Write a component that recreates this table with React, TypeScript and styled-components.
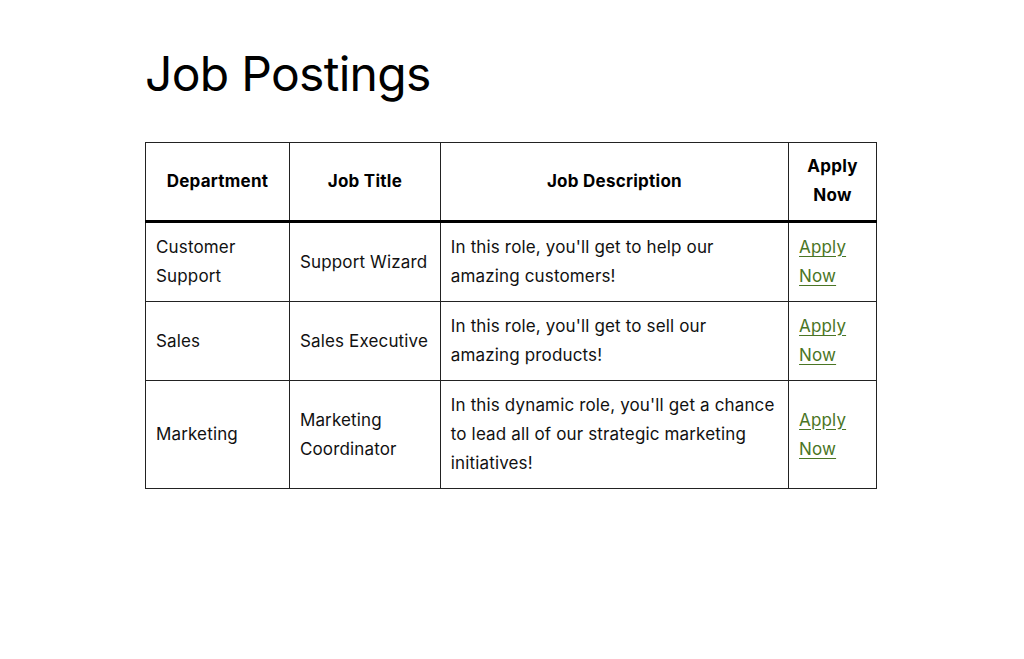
import React from "react";
import styled, { createGlobalStyle } from "styled-components";

const Global = createGlobalStyle`
  html, body { margin: 0; padding: 0; background: #fff; }
  body { font-family: Inter, "Noto Sans", sans-serif; color: #111; }
`;

const Page = styled.main`
  padding: 0 0 0 145px;
`;

const Title = styled.h1`
  font-size: 48px;
  font-weight: 400;
  margin: 0;
  padding-top: 44px;
  line-height: 60px;
  letter-spacing: -0.7px;
  color: #000;
`;

const Table = styled.table`
  margin-top: 38px;
  border-collapse: collapse;
  width: 732px;
  font-size: 17px;
  line-height: 29px;
  letter-spacing: 0.15px;
  color: #111;
`;

const Th = styled.th<{ $w: number }>`
  width: ${(p) => p.$w}px;
  border: 1px solid #222;
  border-bottom: 3px solid #000;
  padding: 9px 10px 10px;
  font-weight: 700;
  letter-spacing: 0.25px;
  text-align: center;
  color: #000;
  box-sizing: border-box;
`;

const Td = styled.td`
  border: 1px solid #222;
  padding: 10px 9px 10px 10px;
  vertical-align: middle;
`;

const Link = styled.a`
  color: #4a7525;
  text-decoration: underline;
  text-underline-offset: 3px;
`;

const rows = [
  ["Customer Support", "Support Wizard", "In this role, you'll get to help our amazing customers!"],
  ["Sales", "Sales Executive", "In this role, you'll get to sell our amazing products!"],
  ["Marketing", "Marketing Coordinator", "In this dynamic role, you'll get a chance to lead all of our strategic marketing initiatives!"],
];

export default function App() {
  return (
    <>
      <Global />
      <Page>
        <Title>Job Postings</Title>
        <Table>
          <thead>
            <tr>
              <Th $w={144}>Department</Th>
              <Th $w={151}>Job Title</Th>
              <Th $w={349}>Job Description</Th>
              <Th $w={88}>Apply Now</Th>
            </tr>
          </thead>
          <tbody>
            {rows.map((r) => (
              <tr key={r[0]}>
                <Td>{r[0]}</Td>
                <Td>{r[1]}</Td>
                <Td>{r[2]}</Td>
                <Td>
                  <Link href="#">Apply Now</Link>
                </Td>
              </tr>
            ))}
          </tbody>
        </Table>
      </Page>
    </>
  );
}
